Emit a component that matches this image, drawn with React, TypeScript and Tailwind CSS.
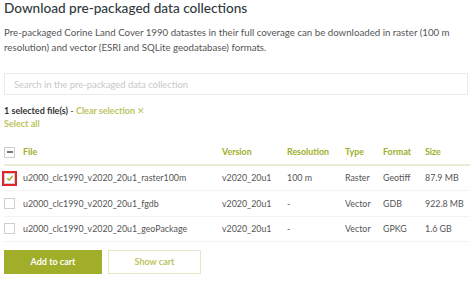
import { useState } from "react";

type Row = {
  file: string;
  version: string;
  resolution: string;
  type: string;
  format: string;
  size: string;
};

const rows: Row[] = [
  { file: "u2000_clc1990_v2020_20u1_raster100m", version: "v2020_20u1", resolution: "100 m", type: "Raster", format: "Geotiff", size: "87.9 MB" },
  { file: "u2000_clc1990_v2020_20u1_fgdb", version: "v2020_20u1", resolution: "-", type: "Vector", format: "GDB", size: "922.8 MB" },
  { file: "u2000_clc1990_v2020_20u1_geoPackage", version: "v2020_20u1", resolution: "-", type: "Vector", format: "GPKG", size: "1.6 GB" },
];

function Check({ checked, focus }: { checked: boolean; focus?: boolean }) {
  return (
    <span
      className={
        "flex h-[11px] w-[11px] items-center justify-center border border-[#cfcfcf] bg-white " +
        (focus ? "outline-2 outline-[#e0262b]" : "")
      }
    >
      {checked && (
        <svg viewBox="0 0 10 10" className="h-[8px] w-[8px]">
          <path d="M1.5 5.2 L4 7.5 L8.5 2.2" fill="none" stroke="#a0ae2a" strokeWidth="1.6" />
        </svg>
      )}
    </span>
  );
}

export default function App() {
  const [selected, setSelected] = useState<number[]>([0]);

  const toggle = (i: number) =>
    setSelected((s) => (s.includes(i) ? s.filter((x) => x !== i) : [...s, i]));

  return (
    <div className="w-[474px] bg-white px-[4px] font-['Lato',sans-serif] text-[#555]">
      <h2 className="text-[13.6px] font-medium leading-[16px] text-[#323a40]">Download pre-packaged data collections</h2>
      <p className="mt-[9px] text-[9.7px] leading-[15px] text-[#555]">
        Pre-packaged Corine Land Cover 1990 datastes in their full coverage can be downloaded in raster (100 m
        resolution) and vector (ESRI and SQLite geodatabase) formats.
      </p>

      <input
        className="mt-[18px] h-[22px] w-[464px] border border-[#ececec] px-[9px] text-[9.4px] text-[#555] placeholder:text-[#c8c8c8] outline-none"
        placeholder="Search in the pre-packaged data collection"
      />

      <div className="mt-[9px] text-[9px] leading-[13px]">
        <span className="font-bold text-[#333]">{selected.length} selected file(s)</span>
        <span className="text-[#333]"> - </span>
        <button className="font-bold text-[#bcc460]" onClick={() => setSelected([])}>
          Clear selection <span className="font-normal">✕</span>
        </button>
      </div>
      <button className="block text-[9px] font-bold leading-[13px] text-[#bcc460]" onClick={() => setSelected([0, 1, 2])}>
        Select all
      </button>

      <table className="mt-[16px] w-[466px] border-collapse text-[8.85px]">
        <thead>
          <tr className="border-b-2 border-[#e9ecd6] text-left leading-[12px] text-[#a0ae2a]">
            <th className="w-[19px] pb-[6px] font-bold">
              <span className="flex h-[11px] w-[11px] items-center justify-center border border-[#cfcfcf] bg-white">
                <span className="h-[1.5px] w-[6px] bg-[#777]" />
              </span>
            </th>
            <th className="w-[199px] pb-[6px] font-bold">File</th>
            <th className="w-[65px] pb-[6px] font-bold">Version</th>
            <th className="w-[58px] pb-[6px] font-bold">Resolution</th>
            <th className="w-[38px] pb-[6px] font-bold">Type</th>
            <th className="w-[42px] pb-[6px] font-bold">Format</th>
            <th className="pb-[6px] font-bold">Size</th>
          </tr>
        </thead>
        <tbody>
          {rows.map((r, i) => (
            <tr key={r.file} className="h-[25.5px] border-b border-[#f3f3f3] text-[#555]">
              <td onClick={() => toggle(i)}>
                <Check checked={selected.includes(i)} focus={i === 0} />
              </td>
              <td>{r.file}</td>
              <td>{r.version}</td>
              <td>{r.resolution}</td>
              <td>{r.type}</td>
              <td>{r.format}</td>
              <td>{r.size}</td>
            </tr>
          ))}
        </tbody>
      </table>

      <div className="mt-[8px] flex gap-[6px]">
        <button className="h-[24px] w-[98px] bg-[#a0ae2a] text-[9px] font-bold text-white">Add to cart</button>
        <button className="h-[24px] w-[93px] border border-[#e4e7c6] text-[9px] font-bold text-[#bcc460]">Show cart</button>
      </div>
    </div>
  );
}
